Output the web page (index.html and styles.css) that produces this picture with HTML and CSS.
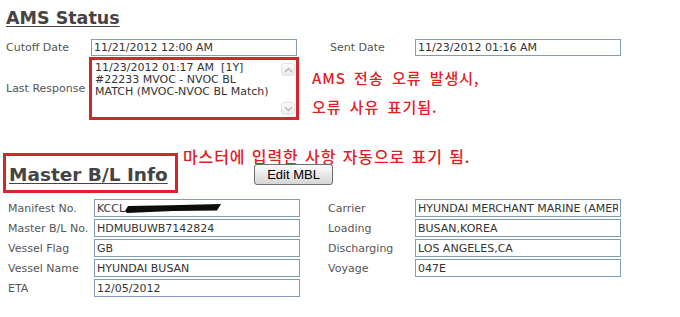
FILE: index.html
```html
<!DOCTYPE html>
<html lang="ko">
<head>
    <meta charset="UTF-8">
    <title>AMS Status</title>
    <link rel="stylesheet" href="styles.css">
</head>
<body>
    <div class="page">
        <h2 class="title">AMS Status</h2>

        <div class="ams-grid">
            <label class="lbl">Cutoff Date</label>
            <input class="field" type="text" value="11/21/2012 12:00 AM" readonly>
            <span></span>
            <label class="lbl">Sent Date</label>
            <input class="field" type="text" value="11/23/2012 01:16 AM" readonly>

            <label class="lbl">Last Response</label>
            <div class="mark-box">
                <div class="response">
                    <div class="response-text">11/23/2012 01:17 AM  [1Y]
#22233 MVOC - NVOC BL
MATCH (MVOC-NVOC BL Match)</div>
                    <div class="scroll">
                        <span class="scroll-btn">
                            <svg width="9" height="6" viewBox="0 0 9 6"><path d="M1 5 L4.5 1.5 L8 5" fill="none" stroke="#b4b4b4" stroke-width="1.3"/></svg>
                        </span>
                        <span class="scroll-btn">
                            <svg width="9" height="6" viewBox="0 0 9 6"><path d="M1 1 L4.5 4.5 L8 1" fill="none" stroke="#b4b4b4" stroke-width="1.3"/></svg>
                        </span>
                    </div>
                </div>
            </div>
            <div class="note note-ams">AMS 전송 오류 발생시,<br>오류 사유 표기됨.</div>
        </div>

        <div class="mbl-head">
            <div class="mark-title">
                <h2 class="title title-mbl">Master B/L Info</h2>
            </div>
            <div class="mbl-side">
                <div class="note note-mbl">마스터에 입력한 사항 자동으로 표기 됨.</div>
                <button class="btn" type="button">Edit MBL</button>
            </div>
        </div>

        <div class="mbl-grid">
            <label class="lbl">Manifest No.</label>
            <div class="field field-div">KCCL<svg class="redact" width="96" height="9" viewBox="0 0 96 9"><polygon points="0,7 3,2 45,1.2 96,0 92,6.5 48,7 2,9" fill="#0c0c0c"/></svg></div>
            <span></span>
            <label class="lbl">Carrier</label>
            <input class="field" type="text" value="HYUNDAI MERCHANT MARINE (AMERICA)" readonly>

            <label class="lbl">Master B/L No.</label>
            <input class="field" type="text" value="HDMUBUWB7142824" readonly>
            <span></span>
            <label class="lbl">Loading</label>
            <input class="field" type="text" value="BUSAN,KOREA" readonly>

            <label class="lbl">Vessel Flag</label>
            <input class="field" type="text" value="GB" readonly>
            <span></span>
            <label class="lbl">Discharging</label>
            <input class="field" type="text" value="LOS ANGELES,CA" readonly>

            <label class="lbl">Vessel Name</label>
            <input class="field" type="text" value="HYUNDAI BUSAN" readonly>
            <span></span>
            <label class="lbl">Voyage</label>
            <input class="field" type="text" value="047E" readonly>

            <label class="lbl">ETA</label>
            <input class="field" type="text" value="12/05/2012" readonly>
        </div>
    </div>
</body>
</html>
```

FILE: styles.css
```css
* {
    margin: 0;
    padding: 0;
    box-sizing: border-box;
}

body {
    background: #fff;
    font-family: 'DejaVu Sans', Verdana, sans-serif;
    font-size: 11px;
    color: #333;
}

.page {
    padding: 8px 0 0 6px;
}

.title {
    font-size: 17.5px;
    line-height: 20px;
    font-weight: bold;
    color: #444;
    text-decoration: underline;
    text-underline-offset: 2px;
}

.title-mbl {
    font-size: 18.5px;
    line-height: 22px;
}

.lbl {
    color: #555;
    white-space: nowrap;
}

.field {
    display: block;
    height: 18px;
    border: 1px solid #7f9db9;
    background: #fff;
    padding: 0 2px;
    font-family: 'DejaVu Sans', Verdana, sans-serif;
    font-size: 11px;
    color: #333;
    outline: none;
    width: 100%;
}

.field-div {
    display: flex;
    align-items: center;
    overflow: hidden;
    white-space: nowrap;
}

.redact {
    margin-top: 1px;
}

/* top block */
.ams-grid {
    display: grid;
    grid-template-columns: 85px 206px 33px 85px 206px;
    grid-template-rows: 17px 63px;
    row-gap: 1px;
    align-items: center;
    margin-top: 11px;
}

.ams-grid .field {
    height: 17px;
}

.mark-box {
    margin-left: -2px;
    width: 210px;
    height: 63px;
    border: 3px solid #d4262b;
}

.response {
    display: flex;
    height: 100%;
    background: #fff;
}

.response-text {
    flex: 1;
    padding: 2px 0 0 3px;
    line-height: 12px;
    white-space: pre;
    color: #333;
    overflow: hidden;
}

.scroll {
    width: 15px;
    display: flex;
    flex-direction: column;
    justify-content: space-between;
    padding: 3px 1px 2px 0;
}

.scroll-btn {
    width: 14px;
    height: 13px;
    border: 1px solid #e2e2e2;
    border-radius: 3px;
    background: linear-gradient(#fbfbfb, #ececec);
    display: flex;
    align-items: center;
    justify-content: center;
}

.note {
    font-family: 'Noto Sans CJK KR', 'Noto Sans', sans-serif;
    font-weight: 500;
    color: #e0201f;
    white-space: nowrap;
}

.note-ams {
    grid-column: 3 / 6;
    align-self: start;
    padding: 6px 0 0 15px;
    font-size: 15px;
    line-height: 29px;
    letter-spacing: 1px;
    word-spacing: 3px;
}

/* master b/l heading */
.mbl-head {
    display: flex;
    align-items: flex-start;
    margin-top: 28px;
}

.mark-title {
    margin: 5px 0 0 -3px;
    width: 175px;
    height: 40px;
    border: 3px solid #d4262b;
    padding: 8px 0 0 3px;
}

.mbl-side {
    margin-left: 5px;
    display: flex;
    flex-direction: column;
    align-items: flex-start;
}

.note-mbl {
    font-size: 16px;
    line-height: 16px;
    letter-spacing: 0.9px;
    word-spacing: 1px;
}

.btn {
    margin-left: 71px;
    width: 79px;
    height: 21px;
    font-family: 'Liberation Sans', Arial, sans-serif;
    font-size: 13px;
    color: #000;
    background: linear-gradient(#fdfdfd, #e6e6e6 55%, #d6d6d6);
    border: 1px solid #6e6e6e;
    border-radius: 3px;
}

/* master b/l fields */
.mbl-grid {
    display: grid;
    grid-template-columns: 88px 206px 28px 87px 206px;
    grid-auto-rows: 18px;
    row-gap: 2px;
    align-items: center;
    margin-top: 6px;
}

.mbl-grid .lbl:nth-child(5n+1) {
    padding-left: 2px;
}
```
